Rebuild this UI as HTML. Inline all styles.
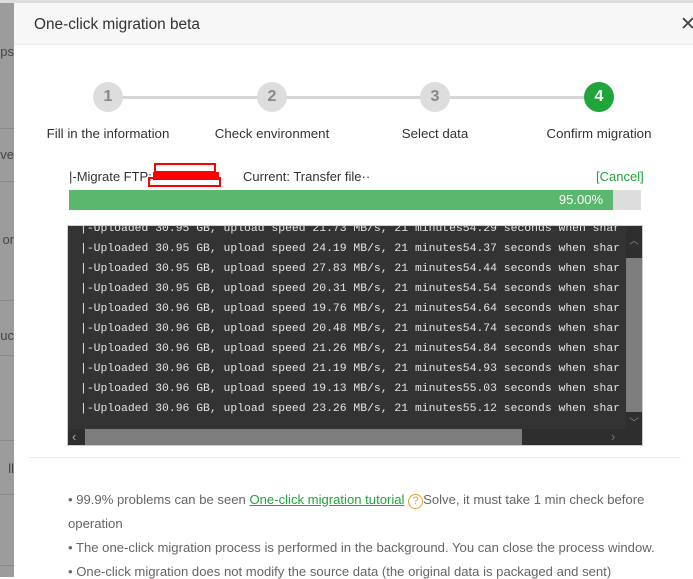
<!DOCTYPE html>
<html><head><meta charset="utf-8"><style>
*{margin:0;padding:0;box-sizing:border-box}
body{width:693px;height:577px;overflow:hidden;background:#fff;font-family:"Liberation Sans",sans-serif;position:relative}
.strip{position:absolute;left:0;top:0;width:14px;height:577px;background:#9c9c9c;overflow:hidden}
.strip .l{position:absolute;left:0;width:14px;height:1px;background:#888}
.strip .t{position:absolute;right:0;font-size:13px;color:#444;white-space:nowrap}
.top{position:absolute;left:0;top:0;width:693px;height:3px;background:#ddd}
.hdr{position:absolute;left:14px;top:3px;width:679px;height:42px;background:#f7f7f7;border-bottom:1px solid #eee}
.hdr span{position:absolute;left:20px;top:13px;font-size:15.4px;color:#333}
.x{position:absolute;left:680px;top:15px;font-size:19px;color:#444;line-height:1;font-weight:300}
.line{position:absolute;top:96px;height:3px;background:#d6d6d6}
.c{position:absolute;top:82px;width:30px;height:30px;border-radius:50%;background:#ddd;color:#888;font-weight:bold;font-size:16px;text-align:center;line-height:30px}
.c.g{background:#20a53a;color:#fff}
.lab{position:absolute;top:126px;font-size:13.3px;color:#333;white-space:nowrap;transform:translateX(-50%)}
.log{position:absolute;left:67px;top:225px;width:576px;height:221px;background:#333;border:1px solid #ccc;overflow:hidden}
.row{position:absolute;left:12px;font-family:"Liberation Mono",monospace;font-size:11.4px;color:#e4e4e4;white-space:pre}
.help{position:absolute;left:68px;font-size:13.1px;color:#666;white-space:nowrap}
</style></head><body>
<div class="strip">
<div class="l" style="top:128px"></div><div class="l" style="top:181px"></div><div class="l" style="top:300px"></div><div class="l" style="top:355px"></div><div class="l" style="top:440px"></div><div class="l" style="top:494px"></div><div class="l" style="top:565px"></div>
<div class="t" style="top:44px">ps</div><div class="t" style="top:147px">ve</div><div class="t" style="top:232px">or</div><div class="t" style="top:328px">ouc</div><div class="t" style="top:461px">ll</div>
</div>
<div class="top"></div>
<div class="hdr"><span>One-click migration beta</span></div>
<div class="x">✕</div>
<div class="line" style="left:108px;width:491px"></div>
<div class="c" style="left:93px">1</div><div class="c" style="left:257px">2</div><div class="c" style="left:420px">3</div><div class="c g" style="left:584px">4</div>
<div class="lab" style="left:108px">Fill in the information</div>
<div class="lab" style="left:272px">Check environment</div>
<div class="lab" style="left:435px">Select data</div>
<div class="lab" style="left:599px">Confirm migration</div>
<div style="position:absolute;left:69px;top:169px;font-size:13px;color:#333">|-Migrate FTP:</div>
<div style="position:absolute;left:154px;top:163px;width:62px;height:10px;border:2px solid #f00"></div>
<div style="position:absolute;left:153px;top:172px;width:66px;height:8px;background:#f00"></div>
<div style="position:absolute;left:148px;top:177px;width:73px;height:10px;border:2px solid #f00"></div>
<div style="position:absolute;left:243px;top:169px;font-size:13px;color:#333">Current: Transfer file··</div>
<div style="position:absolute;left:596px;top:169px;font-size:13px;color:#20a53a">[Cancel]</div>
<div style="position:absolute;left:69px;top:190px;width:572px;height:20px;background:#ddd"></div>
<div style="position:absolute;left:69px;top:190px;width:544px;height:20px;background:#5bb66e;color:#fff;font-size:13px;text-align:right;padding-right:10px;line-height:20px">95.00%</div>
<div class="log">
<div class="row" style="top:-3px">|-Uploaded 30.95 GB, upload speed 21.73 MB/s, 21 minutes54.29 seconds when shar</div>
<div class="row" style="top:17px">|-Uploaded 30.95 GB, upload speed 24.19 MB/s, 21 minutes54.37 seconds when shar</div>
<div class="row" style="top:37px">|-Uploaded 30.95 GB, upload speed 27.83 MB/s, 21 minutes54.44 seconds when shar</div>
<div class="row" style="top:57px">|-Uploaded 30.95 GB, upload speed 20.31 MB/s, 21 minutes54.54 seconds when shar</div>
<div class="row" style="top:77px">|-Uploaded 30.96 GB, upload speed 19.76 MB/s, 21 minutes54.64 seconds when shar</div>
<div class="row" style="top:97px">|-Uploaded 30.96 GB, upload speed 20.48 MB/s, 21 minutes54.74 seconds when shar</div>
<div class="row" style="top:117px">|-Uploaded 30.96 GB, upload speed 21.26 MB/s, 21 minutes54.84 seconds when shar</div>
<div class="row" style="top:137px">|-Uploaded 30.96 GB, upload speed 21.19 MB/s, 21 minutes54.93 seconds when shar</div>
<div class="row" style="top:157px">|-Uploaded 30.96 GB, upload speed 19.13 MB/s, 21 minutes55.03 seconds when shar</div>
<div class="row" style="top:177px">|-Uploaded 30.96 GB, upload speed 23.26 MB/s, 21 minutes55.12 seconds when shar</div>
<div style="position:absolute;left:558px;top:0;width:17px;height:203px;background:#2e2e2e"></div>
<div style="position:absolute;left:558px;top:32px;width:17px;height:154px;background:#7d7d7d"></div>
<div style="position:absolute;left:561px;top:6px;color:#888;font-size:10px">︿</div>
<div style="position:absolute;left:561px;top:188px;color:#888;font-size:10px">﹀</div>
<div style="position:absolute;left:0;top:203px;width:575px;height:17px;background:#2e2e2e"></div>
<div style="position:absolute;left:17px;top:203px;width:437px;height:17px;background:#7d7d7d"></div>
<div style="position:absolute;left:4px;top:203px;color:#aaa;font-size:13px">‹</div>
<div style="position:absolute;left:543px;top:203px;color:#777;font-size:13px">›</div>
</div>
<div style="position:absolute;left:28px;top:457px;width:653px;height:1px;background:#eee"></div>
<div class="help" style="top:492px">• 99.9% problems can be seen <span style="color:#20a53a;text-decoration:underline">One-click migration tutorial</span> <span style="display:inline-block;width:15px;height:15px;border:1px solid #f39c34;border-radius:50%;color:#f39c34;font-size:11px;text-align:center;line-height:13px">?</span>Solve, it must take 1 min check before</div>
<div class="help" style="top:516px">operation</div>
<div class="help" style="top:540px">• The one-click migration process is performed in the background. You can close the process window.</div>
<div class="help" style="top:564px">• One-click migration does not modify the source data (the original data is packaged and sent)</div>
</body></html>
